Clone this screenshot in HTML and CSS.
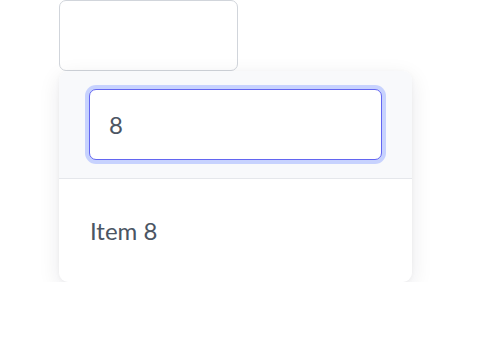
FILE: index.html
```html
<!DOCTYPE html>
<html>
<head>
<meta charset="utf-8">
<link rel="stylesheet" href="styles.css">
</head>
<body>
<div class="trigger"></div>
<div class="panel">
  <div class="search">
    <div class="input"><span>8</span></div>
  </div>
  <div class="list">
    <div class="item">Item 8</div>
  </div>
</div>
</body>
</html>
```
FILE: styles.css
```css
html, body {
  margin: 0;
  padding: 0;
  background: #ffffff;
  font-family: "Lato", "Open Sans", sans-serif;
}
.trigger {
  margin-left: 59px;
  width: 179px;
  height: 71px;
  box-sizing: border-box;
  border: 1px solid #d1d5db;
  border-radius: 7px;
  background: #ffffff;
}
.panel {
  margin-left: 59px;
  width: 353px;
  border-radius: 9px;
  background: #ffffff;
  box-shadow: 0 6px 22px rgba(17, 24, 39, 0.09), 0 1px 4px rgba(17, 24, 39, 0.04);
  overflow: hidden;
}
.search {
  background: #f8f9fb;
  padding: 18px 30px;
  border-bottom: 1px solid #e5e7eb;
}
.input {
  height: 71px;
  box-sizing: border-box;
  border: 1px solid #6366f1;
  border-radius: 7px;
  box-shadow: 0 0 0 4px #c7d2fe;
  background: #ffffff;
  display: flex;
  align-items: center;
  padding-left: 19px;
  font-size: 24px;
  color: #4b5563;
}
.item {
  height: 103px;
  display: flex;
  align-items: center;
  padding-left: 31px;
  font-size: 24px;
  color: #4b5563;
}
```
